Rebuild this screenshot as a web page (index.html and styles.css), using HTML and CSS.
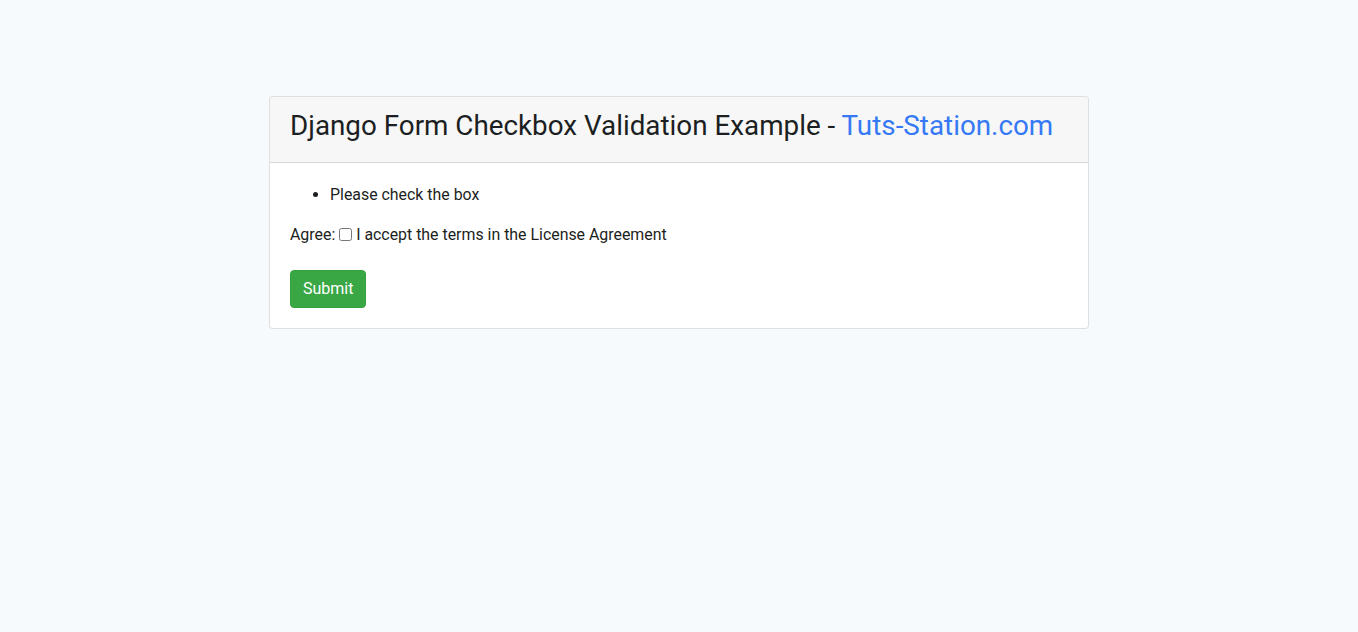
FILE: index.html
```html
<!DOCTYPE html>
<html lang="en">

<head>
    <meta charset="UTF-8">
    <meta name="viewport" content="width=device-width, initial-scale=1.0">
    <title>Django Form Checkbox Validation Example</title>
    <link rel="stylesheet" href="styles.css">
</head>

<body>

    <div class="container">
        <div class="card">
            <div class="card-header">
                <h3>Django Form Checkbox Validation Example - <a href="#">Tuts-Station.com</a></h3>
            </div>
            <div class="card-body">
                <form method="post">
                    <ul class="errorlist">
                        <li>Please check the box</li>
                    </ul>
                    <p>
                        <label for="id_agree">Agree:</label>
                        <input type="checkbox" id="id_agree" name="agree">
                        I accept the terms in the License Agreement
                    </p>
                    <button type="submit" class="btn-success">Submit</button>
                </form>
            </div>
        </div>
    </div>

</body>

</html>
```

FILE: styles.css
```css
/* Page base */
body {
    font-family: Roboto, "Liberation Sans", Arial, sans-serif;
    font-size: 15.9px;
    line-height: 24px;
    color: #1c1f22;
    background-color: #f6fafd;
    margin: 0;
    padding-top: 96px;
}

.container {
    width: 820px;
    margin: 0 auto;
}

.card {
    background-color: white;
    border: 1px solid rgba(0, 0, 0, 0.125);
    border-radius: 4px;
}

.card-header {
    background-color: #f7f7f7;
    border-bottom: 1px solid rgba(0, 0, 0, 0.125);
    padding: 12px 20px;
    border-radius: 3px 3px 0 0;
}

.card-header h3 {
    margin: 0 0 8px;
    font-size: 27.8px;
    font-weight: 400;
    line-height: 33px;
}

.card-header a {
    color: #3679f4;
    text-decoration: none;
}

.card-body {
    padding: 20px;
}

.errorlist {
    margin: 0 0 16px;
    padding-left: 40px;
}

.card-body p {
    margin: 0 0 23px;
}

.card-body input[type="checkbox"] {
    margin: 0;
    width: 13px;
    height: 13px;
    vertical-align: -1px;
}

.btn-success {
    font-family: inherit;
    font-size: 16px;
    line-height: 24px;
    padding: 6px 12px;
    color: white;
    background-color: #3aa745;
    border: 1px solid #34a140;
    border-radius: 4px;
    cursor: pointer;
}
```
